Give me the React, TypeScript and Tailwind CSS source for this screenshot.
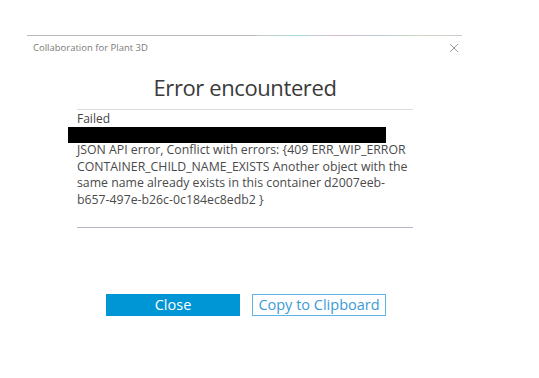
import React from "react";

export default function App() {
  const font = { fontFamily: '"Open Sans", "Noto Sans", sans-serif' };
  return (
    <div className="w-[539px] h-[378px] bg-white overflow-hidden" style={font}>
      <div className="pt-[35px] pl-[27px]">
        <div className="w-[435px]">
          <div className="flex h-[1px]">
            <div className="w-[230px] bg-[#bcbcbc]" />
            <div className="flex-1 bg-[linear-gradient(90deg,#c8c8c8,#a9dcd9,#d9b8c9,#b9c9dc,#cfd9b9,#c9c9d9)]" />
          </div>
          <div className="flex items-center justify-between h-[24px]">
            <span className="pl-[6px] text-[9.5px] text-[#7a7a7a]">Collaboration for Plant 3D</span>
            <svg width="10" height="10" viewBox="0 0 10 10" className="mr-[3px]">
              <path d="M1 1 L9 9 M9 1 L1 9" stroke="#9a9a9a" strokeWidth="1" />
            </svg>
          </div>
        </div>
      </div>
      <div className="w-[336px] ml-[77px] flex flex-col">
        <div className="h-[49px] flex items-center justify-center pt-[4px]">
          <h1 className="text-[22px] leading-none text-[#3a3a3a] font-normal tracking-[-0.4px]">
            Error encountered
          </h1>
        </div>
        <div className="h-px bg-[#dcdcdc]" />
        <div className="text-[12px] leading-[17px] text-[#444444]">Failed</div>
        <div className="-ml-[9px] w-[318px] h-[16px] bg-black" />
        <div className="text-[12.3px] leading-[16.6px] text-[#4a4a4a] whitespace-nowrap -mt-[1px]">
          <div>JSON API error, Conflict with errors: {"{"}409 ERR_WIP_ERROR</div>
          <div>CONTAINER_CHILD_NAME_EXISTS Another object with the</div>
          <div>same name already exists in this container d2007eeb-</div>
          <div>b657-497e-b26c-0c184ec8edb2 {"}"}</div>
        </div>
        <div className="h-[19px]" />
        <div className="h-px bg-[#b9b6c9]" />
      </div>
      <div className="flex gap-[12px] ml-[106px] mt-[66px]">
        <button className="w-[134px] h-[22px] bg-[#0096d6] text-white text-[14.5px] leading-none flex items-center justify-center">
          Close
        </button>
        <button className="w-[134px] h-[22px] border border-[#5cb5e3] text-[#3b9ad8] text-[14.5px] leading-none flex items-center justify-center bg-white">
          Copy to Clipboard
        </button>
      </div>
    </div>
  );
}
